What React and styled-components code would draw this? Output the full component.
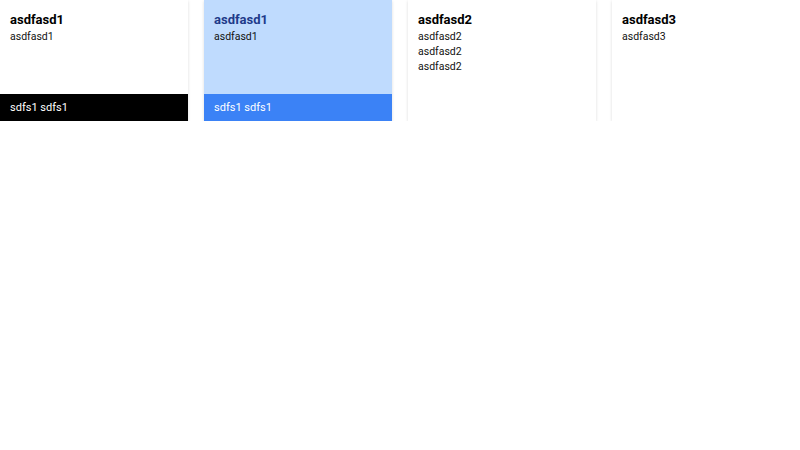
import React from "react";
import styled, { createGlobalStyle } from "styled-components";

const Global = createGlobalStyle`
  html, body { margin: 0; padding: 0; background: #fff; }
  body { font-family: Roboto, "Noto Sans", sans-serif; }
`;

const Grid = styled.div`
  display: grid;
  grid-template-columns: repeat(4, 188px);
  gap: 16px;
`;

const Card = styled.div`
  height: 121px;
  display: flex;
  flex-direction: column;
  background: ${(p) => (p.$active ? "#bfdbfe" : "#fff")};
  box-shadow: 0 1px 3px rgba(0, 0, 0, 0.14);
  box-sizing: border-box;
`;

const Body = styled.div`
  flex: 1;
  padding: 11px 10px 0;
`;

const Title = styled.div`
  font-size: 13px;
  font-weight: 700;
  line-height: 17px;
  color: ${(p) => (p.$active ? "#1e3a8a" : "#000")};
  margin-bottom: 1px;
`;

const Line = styled.div`
  font-size: 10.5px;
  line-height: 15px;
  color: #111;
`;

const Footer = styled.div`
  height: 27px;
  display: flex;
  align-items: center;
  padding: 0 10px;
  font-size: 11px;
  color: #fff;
  background: ${(p) => (p.$active ? "#3b82f6" : "#000")};
`;

const cards = [
  { title: "asdfasd1", lines: ["asdfasd1"], footer: "sdfs1 sdfs1" },
  { title: "asdfasd1", lines: ["asdfasd1"], footer: "sdfs1 sdfs1", active: true },
  { title: "asdfasd2", lines: ["asdfasd2", "asdfasd2", "asdfasd2"] },
  { title: "asdfasd3", lines: ["asdfasd3"] },
];

export default function App() {
  return (
    <>
      <Global />
      <Grid>
        {cards.map((c, i) => (
          <Card key={i} $active={c.active}>
            <Body>
              <Title $active={c.active}>{c.title}</Title>
              {c.lines.map((l, j) => (
                <Line key={j}>{l}</Line>
              ))}
            </Body>
            {c.footer && <Footer $active={c.active}>{c.footer}</Footer>}
          </Card>
        ))}
      </Grid>
    </>
  );
}
